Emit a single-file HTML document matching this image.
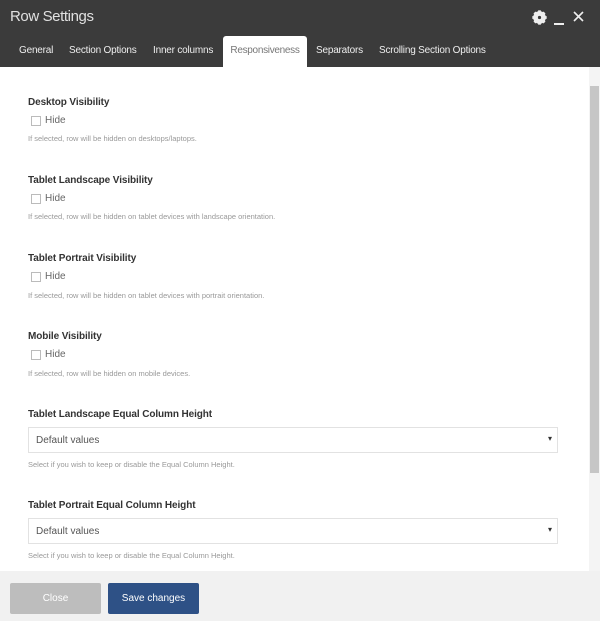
<!DOCTYPE html>
<html><head><style>
*{margin:0;padding:0;box-sizing:border-box}
body{width:600px;height:621px;overflow:hidden;font-family:"Liberation Sans",sans-serif;background:#fff;position:relative}
.hdr{position:absolute;left:0;top:0;width:600px;height:67px;background:#3b3b3b}
.title{position:absolute;left:10px;top:8px;color:#e0e0e0;font-size:15px;letter-spacing:-0.4px}
.tab{position:absolute;top:45px;color:#eee;font-size:10px;letter-spacing:-0.2px}
.act{position:absolute;left:223px;top:36px;width:84px;height:32px;background:#fff;border-radius:3px 3px 0 0;color:#777;font-size:10px;letter-spacing:-0.3px;text-align:center;padding-top:9px}
.lbl{position:absolute;left:28px;font-size:10px;font-weight:bold;color:#333;letter-spacing:-0.1px}
.cb{position:absolute;left:31px;width:10px;height:10px;border:1px solid #bbb;background:#fff}
.hide{position:absolute;left:45px;font-size:10px;color:#666}
.help{position:absolute;left:28px;font-size:7.5px;color:#999}
.sel{position:absolute;left:28px;width:530px;height:26px;border:1px solid #e2e2e2;font-size:10px;color:#555;padding:7px 0 0 7px}
.sel:after{content:"▾";position:absolute;right:5px;top:6px;font-size:8px;color:#333}
.sb{position:absolute;left:589px;top:67px;width:11px;height:504px;background:#f4f4f4}
.thumb{position:absolute;left:590px;top:86px;width:9px;height:387px;background:#c6c6c6}
.ft{position:absolute;left:0;top:571px;width:600px;height:50px;background:#f1f1f1}
.btn{position:absolute;top:583px;height:31px;width:91px;font-size:10px;color:#fff;text-align:center;padding-top:10px;border-radius:2px}
</style></head><body>
<div class="hdr"></div>
<div class="title">Row Settings</div>
<svg style="position:absolute;left:532px;top:10px" width="15" height="15" viewBox="0 0 14 14"><circle cx="7" cy="7" r="4.3" fill="none" stroke="#eee" stroke-width="3.2"/><g stroke="#eee" stroke-width="2.6"><line x1="7" y1="0.3" x2="7" y2="13.7"/><line x1="0.3" y1="7" x2="13.7" y2="7"/><line x1="2.3" y1="2.3" x2="11.7" y2="11.7"/><line x1="11.7" y1="2.3" x2="2.3" y2="11.7"/></g><circle cx="7" cy="7" r="1.5" fill="#3b3b3b"/></svg>
<div style="position:absolute;left:554px;top:23px;width:10px;height:2px;background:#eee"></div>
<svg style="position:absolute;left:573px;top:11px" width="11" height="11"><path d="M1 1L10 10M10 1L1 10" stroke="#eee" stroke-width="1.6"/></svg>
<div class="tab" style="left:19px">General</div>
<div class="tab" style="left:69px">Section Options</div>
<div class="tab" style="left:153px">Inner columns</div>
<div class="act">Responsiveness</div>
<div class="tab" style="left:316px">Separators</div>
<div class="tab" style="left:379px">Scrolling Section Options</div>

<div class="lbl" style="top:97px">Desktop Visibility</div>
<div class="cb" style="top:116px"></div><div class="hide" style="top:115px">Hide</div>
<div class="help" style="top:134px">If selected, row will be hidden on desktops/laptops.</div>

<div class="lbl" style="top:175px">Tablet Landscape Visibility</div>
<div class="cb" style="top:194px"></div><div class="hide" style="top:193px">Hide</div>
<div class="help" style="top:212px">If selected, row will be hidden on tablet devices with landscape orientation.</div>

<div class="lbl" style="top:253px">Tablet Portrait Visibility</div>
<div class="cb" style="top:272px"></div><div class="hide" style="top:271px">Hide</div>
<div class="help" style="top:291px">If selected, row will be hidden on tablet devices with portrait orientation.</div>

<div class="lbl" style="top:331px">Mobile Visibility</div>
<div class="cb" style="top:350px"></div><div class="hide" style="top:349px">Hide</div>
<div class="help" style="top:369px">If selected, row will be hidden on mobile devices.</div>

<div class="lbl" style="top:409px">Tablet Landscape Equal Column Height</div>
<div class="sel" style="top:427px">Default values</div>
<div class="help" style="top:460px">Select if you wish to keep or disable the Equal Column Height.</div>

<div class="lbl" style="top:500px">Tablet Portrait Equal Column Height</div>
<div class="sel" style="top:518px">Default values</div>
<div class="help" style="top:551px">Select if you wish to keep or disable the Equal Column Height.</div>

<div class="sb"></div><div class="thumb"></div>
<div class="ft"></div>
<div class="btn" style="left:10px;background:#bdbdbd">Close</div>
<div class="btn" style="left:108px;background:#2e5186">Save changes</div>
</body></html>
